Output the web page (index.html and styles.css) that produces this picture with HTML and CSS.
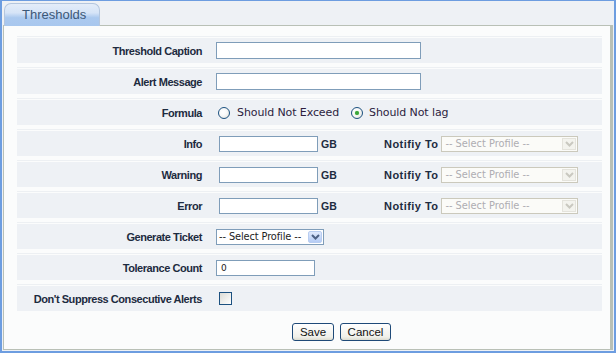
FILE: index.html
```html
<!DOCTYPE html>
<html>
<head>
<meta charset="utf-8">
<link rel="stylesheet" href="styles.css">
</head>
<body>
<div class="frame">
  <div class="tabbar"><div class="tab">Thresholds</div></div>
  <div class="panel">
    <div class="rows">
      <div class="row">
        <div class="label">Threshold Caption</div>
        <div class="value"><span class="input wide"></span></div>
      </div>
      <div class="row">
        <div class="label">Alert Message</div>
        <div class="value"><span class="input wide"></span></div>
      </div>
      <div class="row">
        <div class="label">Formula</div>
        <div class="value">
          <span class="radio"></span><span class="opt">Should Not Exceed</span>
          <span class="radio checked"><span class="dot"></span></span><span class="opt">Should Not lag</span>
        </div>
      </div>
      <div class="row">
        <div class="label">Info</div>
        <div class="value shift">
          <span class="input small"></span><span class="unit">GB</span>
          <span class="notify">Notifiy To</span>
          <span class="select disabled"><span class="stext">-- Select Profile --</span><span class="arrow"><svg width="11" height="8" viewBox="0 0 11 8"><path d="M2 2 L5.5 5.5 L9 2" fill="none" stroke="#c9c8c0" stroke-width="2"/></svg></span></span>
        </div>
      </div>
      <div class="row">
        <div class="label">Warning</div>
        <div class="value shift">
          <span class="input small"></span><span class="unit">GB</span>
          <span class="notify">Notifiy To</span>
          <span class="select disabled"><span class="stext">-- Select Profile --</span><span class="arrow"><svg width="11" height="8" viewBox="0 0 11 8"><path d="M2 2 L5.5 5.5 L9 2" fill="none" stroke="#c9c8c0" stroke-width="2"/></svg></span></span>
        </div>
      </div>
      <div class="row">
        <div class="label">Error</div>
        <div class="value shift">
          <span class="input small"></span><span class="unit">GB</span>
          <span class="notify">Notifiy To</span>
          <span class="select disabled"><span class="stext">-- Select Profile --</span><span class="arrow"><svg width="11" height="8" viewBox="0 0 11 8"><path d="M2 2 L5.5 5.5 L9 2" fill="none" stroke="#c9c8c0" stroke-width="2"/></svg></span></span>
        </div>
      </div>
      <div class="row">
        <div class="label">Generate Ticket</div>
        <div class="value">
          <span class="select active"><span class="stext">-- Select Profile --</span><span class="arrow"><svg width="11" height="8" viewBox="0 0 11 8"><path d="M2 2 L5.5 5.5 L9 2" fill="none" stroke="#4d6185" stroke-width="2"/></svg></span></span>
        </div>
      </div>
      <div class="row">
        <div class="label">Tolerance Count</div>
        <div class="value"><span class="input tol">0</span></div>
      </div>
      <div class="row">
        <div class="label">Don't Suppress Consecutive Alerts</div>
        <div class="value"><span class="check"></span></div>
      </div>
    </div>
    <div class="buttons">
      <span class="btn save">Save</span>
      <span class="btn cancel">Cancel</span>
    </div>
  </div>
</div>
</body>
</html>
```
FILE: styles.css
```css
html, body {
  margin: 0;
  padding: 0;
  background: #eef1f5;
}
.frame {
  box-sizing: border-box;
  width: 616px;
  height: 353px;
  border-style: solid;
  border-color: #6d9de0;
  border-width: 1px 2px 2px 2px;
  padding: 2px 1px 1px 1px;
  background: #eef1f5;
  display: flex;
  flex-direction: column;
  font-family: "Liberation Sans", Arial, sans-serif;
}
.tabbar {
  height: 22px;
  display: flex;
  padding-left: 1px;
}
.tab {
  box-sizing: border-box;
  width: 96px;
  height: 23px;
  border: 1px solid #b4c6de;
  border-bottom: none;
  border-radius: 7px 7px 0 0;
  background: linear-gradient(#e4edf9 0%, #d6e4f7 40%, #abc9ef 62%, #a8c7ee 100%);
  color: #3c5878;
  font-size: 13px;
  line-height: 21px;
  padding-left: 17px;
  position: relative;
  z-index: 1;
}
.panel {
  flex: 1;
  background: #fbfcfc;
  border-style: solid;
  border-color: #b9c0b6;
  border-width: 1px 3px 1px 1px;
  padding: 10px 8px 0 13px;
}
.rows {
  display: flex;
  flex-direction: column;
  gap: 4px;
}
.row {
  height: 25px;
  padding-top: 1px;
  border-top: 1px solid #edf0f3;
  background: #eef1f5;
  background-clip: content-box;
  display: flex;
  align-items: center;
  color: #1d2b40;
  font-size: 11px;
}
.label {
  width: 185px;
  text-align: right;
  font-weight: bold;
  letter-spacing: -0.45px;
  flex: none;
}
.value {
  margin-left: 14px;
  display: flex;
  align-items: center;
}
.value.shift {
  margin-left: 17px;
}
.input {
  box-sizing: border-box;
  display: inline-block;
  height: 17px;
  border: 1px solid #7f9db9;
  background: #fff;
}
.input.wide { width: 205px; }
.input.small { width: 99px; height: 16px; }
.input.tol {
  width: 99px;
  height: 16px;
  font-family: "DejaVu Sans", Verdana, sans-serif;
  font-size: 9px;
  line-height: 14px;
  padding-left: 4px;
  color: #222;
}
.unit {
  font-weight: bold;
  font-size: 10.5px;
  margin-left: 3px;
  width: 63px;
}
.notify {
  font-weight: bold;
  font-size: 11px;
  letter-spacing: 0.45px;
  margin-right: 3px;
}
.radio {
  box-sizing: border-box;
  width: 12px;
  height: 12px;
  border-radius: 50%;
  border: 1px solid #1c5180;
  background: radial-gradient(circle at 40% 40%, #fff 0%, #fafafa 40%, #dcdcd4 100%);
  margin-left: 2px;
  margin-right: 7px;
  display: inline-flex;
  align-items: center;
  justify-content: center;
}
.radio.checked { margin-left: 12px; margin-right: 6px; }
.dot {
  width: 4px;
  height: 4px;
  border-radius: 50%;
  background: #3ba53b;
  box-shadow: 0 0 1px #6ccf5f;
}
.opt {
  font-family: "DejaVu Sans", Verdana, sans-serif;
  font-size: 11px;
  color: #2c1d3e;
  letter-spacing: -0.1px;
}
.select {
  box-sizing: border-box;
  display: inline-flex;
  align-items: center;
  justify-content: space-between;
  height: 16px;
  font-family: "DejaVu Sans", Verdana, sans-serif;
  font-size: 9.8px;
  padding: 0 1px 0 3px;
  white-space: nowrap;
}
.select.disabled {
  width: 137px;
  border: 1px solid #cbc9bc;
  background: #fbfbf8;
  color: #aeadb2;
}
.select.active {
  width: 108px;
  border: 1px solid #7f9db9;
  background: #fff;
  color: #222;
  padding-left: 2px;
  letter-spacing: -0.1px;
}
.arrow {
  box-sizing: border-box;
  width: 14px;
  height: 12px;
  display: inline-flex;
  align-items: center;
  justify-content: center;
  flex: none;
}
.disabled .arrow {
  border: 1px solid #e4e3dc;
  background: #f3f3ee;
}
.active .arrow {
  border: 1px solid #b8cdf1;
  border-radius: 2px;
  background: linear-gradient(#dfe9fd, #b5ccf5);
}
.check {
  box-sizing: border-box;
  width: 13px;
  height: 13px;
  border: 1px solid #1c5180;
  background: linear-gradient(135deg, #dcdcd6, #ffffff);
  margin-left: 3px;
}
.buttons {
  display: flex;
  gap: 6px;
  padding-left: 275px;
  margin-top: 12px;
}
.btn {
  box-sizing: border-box;
  height: 18px;
  border: 1px solid #1f4a78;
  border-radius: 3px;
  background: linear-gradient(#ffffff, #f0f0ea 80%, #dcdcd0);
  font-family: "Liberation Sans", Arial, sans-serif;
  font-size: 11.5px;
  color: #111;
  display: inline-flex;
  align-items: center;
  justify-content: center;
}
.btn.save { width: 42px; }
.btn.cancel { width: 51px; }
```
